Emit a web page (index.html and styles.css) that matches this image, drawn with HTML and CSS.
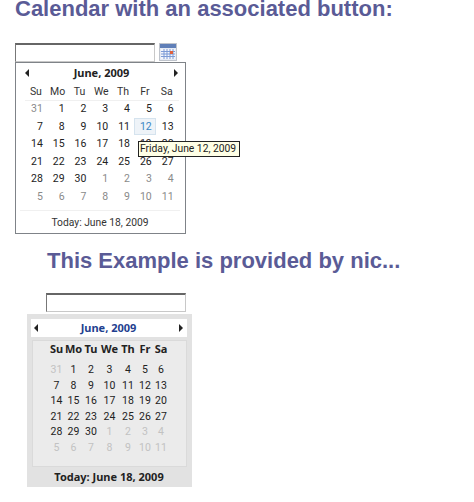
FILE: index.html
```html
<!DOCTYPE html>
<html lang="en">
<head>
<meta charset="utf-8">
<title>Calendar</title>
<link rel="stylesheet" href="styles.css">
</head>
<body>
<section class="demo-one">
  <h1 class="title">Calendar with an associated button:</h1>
  <div class="input-row">
    <div class="field"></div>
    <svg class="cal-icon" width="18" height="18" viewBox="0 0 18 18">
      <rect x="0.5" y="0.5" width="17" height="17" fill="#e6ebf5" stroke="#8d939f" stroke-dasharray="1 1"/>
      <rect x="1" y="1" width="16" height="4" fill="#5f7fb8"/>
      <rect x="2" y="6" width="14" height="10" fill="#f4f6fb"/>
      <path d="M2 8.5h14M2 11h14M2 13.5h14M5 6v10M8 6v10M11 6v10M14 6v10" stroke="#7d9bd6" stroke-width="1" fill="none"/>
      <rect x="11" y="8" width="3" height="3" fill="#e0603c"/>
    </svg>
  </div>
  <div class="popup">
    <div class="nav">
      <span class="arrow-left"></span>
      <span class="month">June, 2009</span>
      <span class="arrow-right"></span>
    </div>
    <div class="grid heads">
      <span>Su</span><span>Mo</span><span>Tu</span><span>We</span><span>Th</span><span>Fr</span><span>Sa</span>
    </div>
    <div class="grid days">
      <span class="other">31</span><span>1</span><span>2</span><span>3</span><span>4</span><span>5</span><span>6</span>
      <span>7</span><span>8</span><span>9</span><span>10</span><span>11</span><span class="selected">12</span><span>13</span>
      <span>14</span><span>15</span><span>16</span><span>17</span><span>18</span><span>19</span><span>20</span>
      <span>21</span><span>22</span><span>23</span><span>24</span><span>25</span><span>26</span><span>27</span>
      <span>28</span><span>29</span><span>30</span><span class="other">1</span><span class="other">2</span><span class="other">3</span><span class="other">4</span>
      <span class="other">5</span><span class="other">6</span><span class="other">7</span><span class="other">8</span><span class="other">9</span><span class="other">10</span><span class="other">11</span>
    </div>
    <div class="today">Today: June 18, 2009</div>
    <div class="tooltip">Friday, June 12, 2009</div>
  </div>
</section>
<section class="demo-two">
  <h1 class="title title-two">This Example is provided by nic...</h1>
  <div class="field field-two"></div>
  <div class="popup-two">
    <div class="nav-two">
      <span class="arrow-left"></span>
      <span class="month-two">June, 2009</span>
      <span class="arrow-right"></span>
    </div>
    <div class="panel">
      <div class="grid-two heads-two">
        <span>Su</span><span>Mo</span><span>Tu</span><span>We</span><span>Th</span><span>Fr</span><span>Sa</span>
      </div>
      <div class="grid-two days-two">
        <span class="other-two">31</span><span>1</span><span>2</span><span>3</span><span>4</span><span>5</span><span>6</span>
        <span>7</span><span>8</span><span>9</span><span>10</span><span>11</span><span>12</span><span>13</span>
        <span>14</span><span>15</span><span>16</span><span>17</span><span>18</span><span>19</span><span>20</span>
        <span>21</span><span>22</span><span>23</span><span>24</span><span>25</span><span>26</span><span>27</span>
        <span>28</span><span>29</span><span>30</span><span class="other-two">1</span><span class="other-two">2</span><span class="other-two">3</span><span class="other-two">4</span>
        <span class="other-two">5</span><span class="other-two">6</span><span class="other-two">7</span><span class="other-two">8</span><span class="other-two">9</span><span class="other-two">10</span><span class="other-two">11</span>
      </div>
    </div>
    <div class="today-two">Today: June 18, 2009</div>
  </div>
</section>
</body>
</html>
```
FILE: styles.css
```css
* { box-sizing: border-box; }
html, body { margin: 0; padding: 0; background: #fff; }
body { font-family: Roboto, "Noto Sans", sans-serif; font-size: 10.5px; color: #222; width: 474px; height: 502px; overflow: hidden; }
.title { margin: 0; font: bold 22px/18px "Liberation Sans", Arial, sans-serif; color: #5a5b96; white-space: nowrap; }
.demo-one { padding: 0 0 0 15px; }
.input-row { display: flex; align-items: center; gap: 4px; margin-top: 24px; height: 20px; }
.field { width: 140px; height: 19px; background: #fff; border: 1px solid #c8c8c8; border-top: 2px solid #666; border-left: 1px solid #777; }
.cal-icon { display: block; }
.popup { position: relative; width: 171px; height: 172px; border: 1px solid #7f8388; background: #fff; padding: 0 6px 0 9px; }
.nav { display: flex; align-items: center; justify-content: space-between; height: 20px; padding-right: 1px; }
.month { font: 700 11px/20px "Noto Sans", sans-serif; color: #222; }
.arrow-left { width: 0; height: 0; border: 4px solid transparent; border-left-width: 0; border-right: 4px solid #222; }
.arrow-right { width: 0; height: 0; border: 4px solid transparent; border-right-width: 0; border-left: 4px solid #222; }
.grid { display: grid; grid-template-columns: repeat(7, 21.8px); }
.heads { height: 18px; line-height: 18px; text-align: center; color: #333; border-bottom: 1px solid #f0f0f0; }
.days { grid-auto-rows: 17.5px; line-height: 17.5px; text-align: right; margin-top: -1px; }
.days span { padding-right: 4px; }
.other { color: #8a8a8a; }
.selected { background: #eef3f8; border: 1px solid #d5e3ee; color: #3b86c4; line-height: 15.5px; padding-right: 3px !important; }
.today { margin: 5px 0 0 -5px; width: 160px; height: 23px; border-top: 1px solid #f0f0f0; text-align: center; line-height: 24px; color: #333; font-size: 10.3px; }
.tooltip { position: absolute; left: 122px; top: 78px; width: 102px; height: 16px; border: 1px solid #222; background: #ffffe6; color: #222; font-size: 10.3px; line-height: 14px; padding-left: 1px; white-space: nowrap; }
.demo-two { padding: 0; }
.title-two { margin: 18px 0 0 47px; }
.field-two { margin: 23px 0 0 46px; }
.popup-two { width: 165px; height: 173px; margin: 2px 0 0 27px; background: #e2e2e2; padding: 5px 5px 0 4px; }
.nav-two { display: flex; align-items: center; justify-content: space-between; height: 18px; background: #fff; padding: 0 4px 0 3px; }
.month-two { font: 700 11px/16px "Noto Sans", sans-serif; color: #1f3f8f; }
.panel { margin: 3px 0 0 1px; width: 155px; height: 127px; background: #ebebeb; border: 1px solid #dadada; padding-left: 15px; }
.grid-two { display: grid; grid-template-columns: 17px 17px 18px 19px 18px 16px 16px; text-align: center; }
.heads-two { height: 18px; font: 700 11px/16px "Noto Sans", sans-serif; color: #222; }
.days-two { margin-top: 3px; grid-auto-rows: 15.6px; line-height: 15.6px; color: #222; }
.other-two { color: #c2c2c2; }
.today-two { text-align: center; font: 700 11px/20px "Noto Sans", sans-serif; color: #222; height: 20px; }
```
